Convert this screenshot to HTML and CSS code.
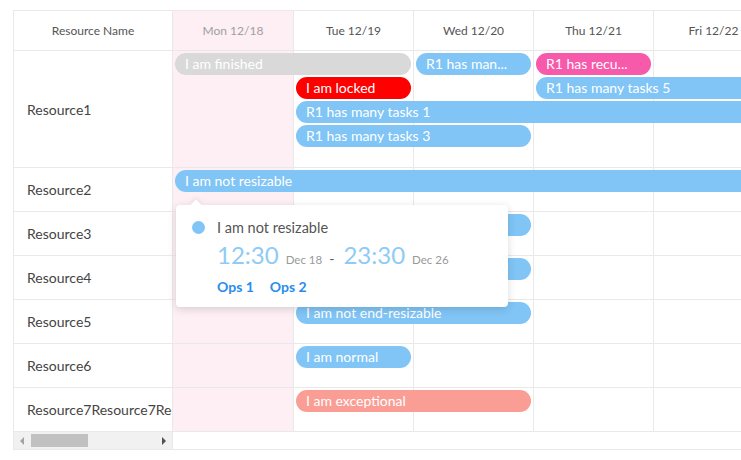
FILE: index.html
```html
<!DOCTYPE html>
<html lang="en">
<head>
    <meta charset="UTF-8">
    <title>Resource Scheduler</title>
    <link rel="stylesheet" href="styles.css">
</head>
<body>
    <div class="scheduler">
        <div class="row head">
            <div class="res res-head">Resource Name</div>
            <div class="days">
                <div class="day today">Mon 12/18</div>
                <div class="day">Tue 12/19</div>
                <div class="day">Wed 12/20</div>
                <div class="day">Thu 12/21</div>
                <div class="day">Fri 12/22</div>
                <div class="day">Sat 12/23</div>
            </div>
        </div>

        <div class="row tall">
            <div class="res">Resource1</div>
            <div class="lane">
                <div class="ev grey" style="grid-column: 1 / 3; grid-row: 1;">I am finished</div>
                <div class="ev blue" style="grid-column: 3 / 4; grid-row: 1;">R1 has man...</div>
                <div class="ev pink" style="grid-column: 4 / 5; grid-row: 1;">R1 has recu...</div>
                <div class="ev red" style="grid-column: 2 / 3; grid-row: 2;">I am locked</div>
                <div class="ev blue open" style="grid-column: 4 / 7; grid-row: 2;">R1 has many tasks 5</div>
                <div class="ev blue open" style="grid-column: 2 / 7; grid-row: 3;">R1 has many tasks 1</div>
                <div class="ev blue" style="grid-column: 2 / 4; grid-row: 4;">R1 has many tasks 3</div>
            </div>
        </div>

        <div class="row">
            <div class="res">Resource2</div>
            <div class="lane">
                <div class="ev blue open" style="grid-column: 1 / 7;">I am not resizable</div>
            </div>
        </div>

        <div class="row">
            <div class="res">Resource3</div>
            <div class="lane">
                <div class="ev blue" style="grid-column: 2 / 4;">I am not movable</div>
            </div>
        </div>

        <div class="row">
            <div class="res">Resource4</div>
            <div class="lane">
                <div class="ev blue" style="grid-column: 2 / 4;">I am not start-resizable</div>
            </div>
        </div>

        <div class="row">
            <div class="res">Resource5</div>
            <div class="lane">
                <div class="ev blue" style="grid-column: 2 / 4;">I am not end-resizable</div>
            </div>
        </div>

        <div class="row">
            <div class="res">Resource6</div>
            <div class="lane">
                <div class="ev blue" style="grid-column: 2 / 3;">I am normal</div>
            </div>
        </div>

        <div class="row">
            <div class="res">Resource7Resource7Resource7</div>
            <div class="lane">
                <div class="ev salmon" style="grid-column: 2 / 4;">I am exceptional</div>
            </div>
        </div>

        <div class="row foot">
            <div class="hscroll">
                <span class="arrow left"></span>
                <span class="thumb"></span>
                <span class="arrow right"></span>
            </div>
            <div class="foot-fill"></div>
        </div>

        <!-- event popover -->
        <div class="popover">
            <div class="pop-title">
                <span class="dot"></span>
                <span>I am not resizable</span>
            </div>
            <div class="pop-time">
                <span class="time">12:30</span>
                <span class="date">Dec 18</span>
                <span class="sep">-</span>
                <span class="time">23:30</span>
                <span class="date">Dec 26</span>
            </div>
            <div class="pop-ops">
                <a href="#">Ops 1</a>
                <a href="#">Ops 2</a>
            </div>
        </div>
    </div>
</body>
</html>
```

FILE: styles.css
```css
/* General Styles */
body {
    margin: 0;
    padding: 10px 0 0 13px;
    font-family: Lato, "Noto Sans", sans-serif;
    background: #fff;
    overflow: hidden;
}

.scheduler {
    position: relative;
    width: 886px;
    border-top: 1px solid #e9e9e9;
    border-left: 1px solid #e9e9e9;
}

.row {
    display: flex;
    height: 43px;
    border-bottom: 1px solid #e9e9e9;
}

.row.tall {
    height: 116px;
}

.res {
    flex: none;
    width: 159px;
    box-sizing: border-box;
    border-right: 1px solid #e9e9e9;
    padding-left: 13px;
    display: flex;
    align-items: center;
    font-size: 14px;
    color: #444;
    white-space: nowrap;
    overflow: hidden;
}

/* Header */
.head {
    height: 39px;
}

.res-head {
    justify-content: center;
    padding-left: 0;
    font-size: 12px;
    color: #555;
}

.days {
    display: flex;
}

.day {
    width: 119px;
    border-right: 1px solid #e9e9e9;
    display: flex;
    align-items: center;
    justify-content: center;
    font-size: 12px;
    color: #555;
}

.day.today {
    width: 120px;
    background: #fdeff3;
    color: #a0a0a0;
}

/* Timeline lane */
.lane {
    display: grid;
    grid-template-columns: 121px repeat(5, 120px);
    grid-auto-rows: 22px;
    row-gap: 2px;
    align-content: start;
    padding-top: 2px;
    box-sizing: border-box;
    background:
        linear-gradient(to right, #fdeff3 0 120px, transparent 120px),
        linear-gradient(to right, transparent 0 119px, #e9e9e9 119px 120px) 1px 0 / 120px 100% repeat-x;
}

.ev {
    margin: 0 3px 0 2px;
    padding-left: 10px;
    border-radius: 11px;
    line-height: 22px;
    font-size: 14px;
    color: #fff;
    white-space: nowrap;
    overflow: hidden;
}

.ev.open {
    border-radius: 11px 0 0 11px;
    margin-right: 0;
}

.blue { background: #80c5f6; }
.grey { background: #d9d9d9; }
.red { background: #ff0000; }
.pink { background: #f759ab; }
.salmon { background: #fa9e95; }

/* Footer with scrollbar */
.foot {
    height: 17px;
}

.hscroll {
    width: 158px;
    flex: none;
    background: #f1f1f1;
    border-right: 1px solid #e9e9e9;
    position: relative;
    display: flex;
    align-items: center;
}

.thumb {
    margin-left: 17px;
    width: 57px;
    height: 13px;
    background: #c1c1c1;
}

.arrow {
    position: absolute;
    top: 5px;
    width: 0;
    height: 0;
    border-top: 4px solid transparent;
    border-bottom: 4px solid transparent;
}

.arrow.left {
    left: 6px;
    border-right: 4px solid #a3a3a3;
}

.arrow.right {
    right: 6px;
    border-left: 4px solid #505050;
}

/* Popover */
.popover {
    position: absolute;
    left: 162px;
    top: 194px;
    width: 332px;
    height: 102px;
    box-sizing: border-box;
    padding: 12px 16px 0;
    background: #fff;
    border-radius: 4px;
    box-shadow: 0 2px 8px rgba(0, 0, 0, 0.15);
}

.popover::before {
    content: "";
    position: absolute;
    left: 16px;
    top: -4px;
    width: 8px;
    height: 8px;
    background: #fff;
    transform: rotate(45deg);
    box-shadow: -2px -2px 4px rgba(0, 0, 0, 0.06);
}

.pop-title {
    display: flex;
    align-items: center;
    gap: 12px;
    height: 20px;
    font-size: 14.5px;
    color: #555;
}

.dot {
    width: 13px;
    height: 13px;
    border-radius: 50%;
    background: #80c5f6;
}

.pop-time {
    display: flex;
    align-items: baseline;
    margin: 3px 0 0 25px;
    height: 32px;
}

.time {
    font-size: 24px;
    color: #8ecbf6;
}

.date {
    margin-left: 7px;
    font-size: 11.5px;
    color: #999;
}

.sep {
    margin: 0 9px 0 7px;
    font-size: 14px;
    color: #555;
}

.pop-ops {
    margin: 6px 0 0 25px;
    display: flex;
    gap: 16px;
}

.pop-ops a {
    font-size: 14px;
    font-weight: bold;
    color: #2a8ced;
    text-decoration: none;
}
```
